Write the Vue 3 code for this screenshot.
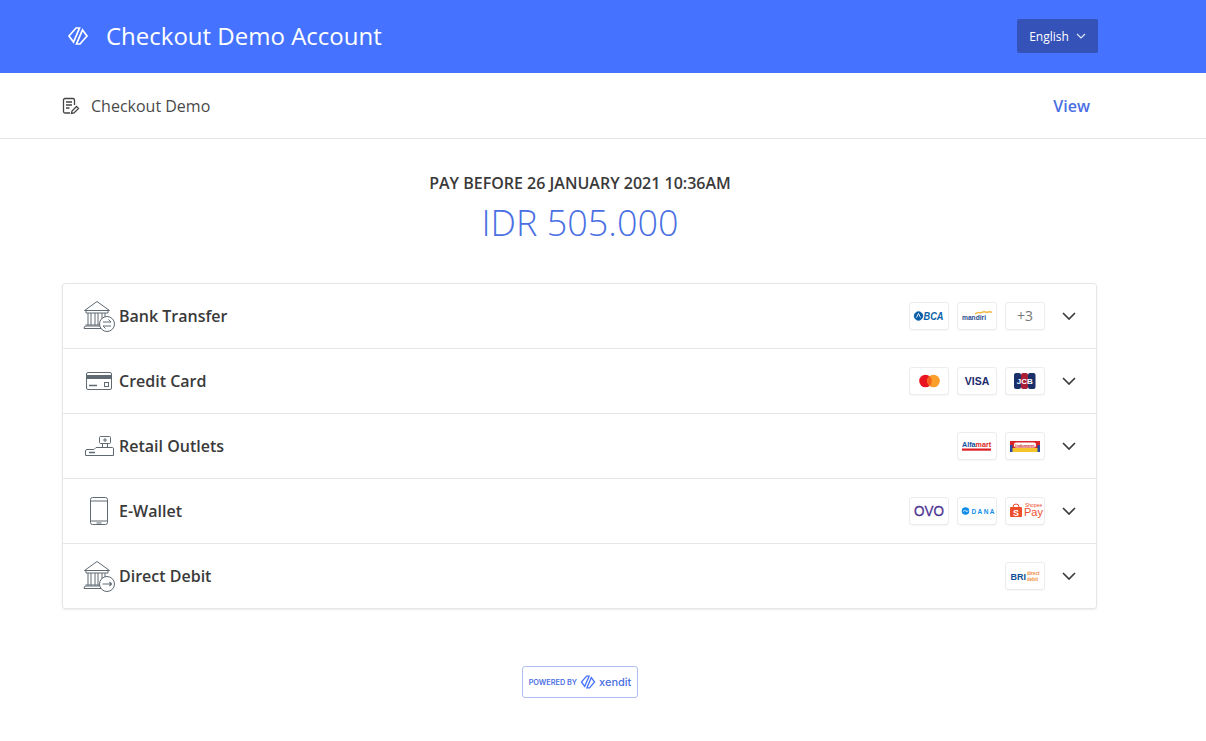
<script setup>
const methods = [
    {
        name: 'Bank Transfer',
        icon: 'bankSwap',
        logos: ['bca', 'mandiri', 'more']
    },
    {
        name: 'Credit Card',
        icon: 'card',
        logos: ['mastercard', 'visa', 'jcb']
    },
    {
        name: 'Retail Outlets',
        icon: 'retail',
        logos: ['alfamart', 'indomaret']
    },
    {
        name: 'E-Wallet',
        icon: 'phone',
        logos: ['ovo', 'dana', 'shopeepay']
    },
    {
        name: 'Direct Debit',
        icon: 'bankArrow',
        logos: ['bri']
    }
]
</script>

<template>
    <div class="page">
        <header class="topbar">
            <div class="topbar-inner">
                <div class="brand">
                    <svg class="brand-icon" viewBox="0 0 22 22" fill="none" stroke="#fff" stroke-width="1.7">
                        <path d="M12.5 3 H9 L2 11 L6.5 17 Z" />
                        <path d="M9.5 19 H13 L20 11 L15.5 5 Z" />
                    </svg>
                    <h1>Checkout Demo Account</h1>
                </div>
                <button class="lang">
                    English
                    <svg viewBox="0 0 10 6" width="10" height="6" fill="none" stroke="#dfe6ff" stroke-width="1.2">
                        <path d="M1 1 L5 5 L9 1" />
                    </svg>
                </button>
            </div>
        </header>

        <div class="subbar">
            <div class="subbar-inner">
                <div class="order">
                    <svg viewBox="0 0 18 18" width="18" height="18" fill="none" stroke="#444" stroke-width="1.3">
                        <path d="M12.5 8 V3 Q12.5 1.5 11 1.5 H3 Q1.5 1.5 1.5 3 V14.5 Q1.5 16 3 16 H8" />
                        <path d="M4 5 H10 M4 8 H10 M4 11 H7.5" />
                        <path d="M9.5 16.5 L10 14 L14.5 9.5 L16.5 11.5 L12 16 Z" />
                    </svg>
                    <span>Checkout Demo</span>
                </div>
                <a class="view">View</a>
            </div>
        </div>

        <main class="main">
            <p class="deadline">PAY BEFORE 26 JANUARY 2021 10:36AM</p>
            <p class="amount">IDR 505.000</p>

            <div class="methods">
                <div v-for="m in methods" :key="m.name" class="method">
                    <svg class="method-icon" viewBox="0 0 36 36" fill="none" stroke="#5f6a73" stroke-width="1">
                        <template v-if="m.icon === 'bankSwap' || m.icon === 'bankArrow'">
                            <path d="M2.5 12.5 L15 3.5 L27.5 12.5 Z" />
                            <path d="M4 12.5 V15 H26 V12.5" />
                            <path d="M6 15 V27 M9 15 V27 M13 15 V27 M16 15 V27 M20 15 V21 M23 15 V19" />
                            <path d="M3.5 27 H18 M2 30.5 Q2 28 4 28 H18 M2 30.5 H19" />
                            <circle cx="25" cy="26" r="7.5" fill="#fff" />
                            <path v-if="m.icon === 'bankSwap'" d="M21 24 H29 L26.5 21.5 M29 28 H21 L23.5 30.5" />
                            <path v-else d="M20.5 26 H29.5 M27.5 24 L29.5 26 L27.5 28" stroke-width="1.2" />
                        </template>
                        <template v-else-if="m.icon === 'card'">
                            <rect x="4.5" y="9.5" width="25" height="17" rx="1.5" />
                            <rect x="4.5" y="12" width="25" height="4" fill="#5f6a73" stroke="none" />
                            <path d="M7 22.5 H15" stroke-width="1.5" />
                            <rect x="22.5" y="19.5" width="4" height="4" />
                        </template>
                        <template v-else-if="m.icon === 'retail'">
                            <path d="M3.5 27.5 V23 Q3.5 21.5 5 21.5 H12 L14 19.5 H30.5 Q31.5 19.5 31.5 21 V27.5 Z" />
                            <rect x="17.5" y="8.5" width="11" height="7" rx="1" />
                            <path d="M23 10 V14 M21 12 H25" />
                            <path d="M20.5 15.5 V19.5 M25.5 15.5 V19.5" />
                            <path d="M7 24.5 H13" stroke-width="1.5" />
                        </template>
                        <template v-else-if="m.icon === 'phone'">
                            <rect x="8.5" y="4.5" width="17" height="27" rx="2" />
                            <path d="M8.5 8 H25.5 M8.5 28 H25.5" />
                            <path d="M14.5 30 H19.5" />
                        </template>
                    </svg>
                    <span class="method-name">{{ m.name }}</span>

                    <div class="logos">
                        <div v-for="logo in m.logos" :key="logo" class="logo">
                            <svg viewBox="0 0 40 28" width="40" height="28">
                                <template v-if="logo === 'bca'">
                                    <circle cx="9.5" cy="14" r="4.2" fill="#0b5fa8" stroke="#0b5fa8" stroke-width="1" />
                                    <path d="M7.5 15.5 L9.5 11.5 L11.5 15.5" fill="none" stroke="#fff" stroke-width="0.9" />
                                    <text x="14.5" y="18" class="t-bca" textLength="20" lengthAdjust="spacingAndGlyphs">BCA</text>
                                </template>
                                <template v-else-if="logo === 'mandiri'">
                                    <path d="M18 12 Q21 9.5 24 11 M24 11 Q27 9 30 10.5 M30 10.5 Q33 9 35 10.5" fill="none" stroke="#f4b73f" stroke-width="1.5" />
                                    <text x="5" y="18" class="t-mandiri" textLength="24" lengthAdjust="spacingAndGlyphs">mandiri</text>
                                </template>
                                <text v-else-if="logo === 'more'" x="20" y="19" class="t-more">+3</text>
                                <template v-else-if="logo === 'mastercard'">
                                    <circle cx="16.5" cy="14" r="6.3" fill="#e8141f" />
                                    <circle cx="24.5" cy="14" r="6.3" fill="#fb9e2a" />
                                    <path d="M20.5 9.1 A6.3 6.3 0 0 1 20.5 18.9 A6.3 6.3 0 0 1 20.5 9.1" fill="#f5641e" />
                                </template>
                                <text v-else-if="logo === 'visa'" x="20" y="18" class="t-visa">VISA</text>
                                <template v-else-if="logo === 'jcb'">
                                    <rect x="9" y="6" width="7" height="16" rx="2" fill="#1b2f6b" />
                                    <rect x="16" y="6" width="7" height="16" rx="2" fill="#a81f36" />
                                    <rect x="23" y="6" width="7.5" height="16" rx="2" fill="#1b2f6b" />
                                    <text x="19.8" y="17" class="t-jcb">JCB</text>
                                </template>
                                <template v-else-if="logo === 'alfamart'">
                                    <text x="5" y="15" class="t-alfa"><tspan fill="#0f4fa0">Alfa</tspan><tspan fill="#dd1f26">mart</tspan></text>
                                    <rect x="5" y="16.5" width="29" height="2.2" fill="#dd1f26" />
                                </template>
                                <template v-else-if="logo === 'indomaret'">
                                    <rect x="5" y="9" width="30" height="7" fill="#d8232a" />
                                    <rect x="5" y="16" width="30" height="4" fill="#f5c32c" />
                                    <rect x="5" y="13" width="2.5" height="7" fill="#254c9c" />
                                    <rect x="32.5" y="13" width="2.5" height="7" fill="#254c9c" />
                                    <rect x="9" y="10.5" width="22" height="5" rx="2" fill="#fff" />
                                    <text x="20" y="14.5" class="t-indo">Indomaret</text>
                                </template>
                                <text v-else-if="logo === 'ovo'" x="5" y="19" class="t-ovo" textLength="30" lengthAdjust="spacingAndGlyphs">OVO</text>
                                <template v-else-if="logo === 'dana'">
                                    <circle cx="8.5" cy="14" r="3.8" fill="#118eea" />
                                    <path d="M6 14.5 Q7.5 12.5 9 14 T11 13.5" fill="none" stroke="#fff" stroke-width="0.8" />
                                    <text x="14.5" y="16.5" class="t-dana">DANA</text>
                                </template>
                                <template v-else-if="logo === 'shopeepay'">
                                    <rect x="5" y="10" width="12" height="10" rx="1" fill="#ee4d2d" />
                                    <path d="M8 10 Q8 7 11 7 Q14 7 14 10" fill="none" stroke="#ee4d2d" stroke-width="1" />
                                    <text x="11" y="18.5" class="t-s">S</text>
                                    <text x="20" y="10" class="t-shopee">Shopee</text>
                                    <text x="19" y="19" class="t-pay">Pay</text>
                                </template>
                                <template v-else-if="logo === 'bri'">
                                    <text x="5.5" y="18" class="t-bri">BRI</text>
                                    <text x="22" y="13" class="t-direct">direct</text>
                                    <text x="22" y="18.5" class="t-direct">debit</text>
                                </template>
                            </svg>
                        </div>
                    </div>

                    <svg class="chevron" viewBox="0 0 14 8" width="14" height="8" fill="none" stroke="#3c3c3c" stroke-width="1.7">
                        <path d="M1 1 L7 7 L13 1" />
                    </svg>
                </div>
            </div>

            <div class="powered">
                <span class="powered-by">POWERED BY</span>
                <svg class="powered-icon" viewBox="0 0 22 22" width="16" height="16" fill="none" stroke="#4573ff" stroke-width="1.8">
                    <path d="M12.5 3 H9 L2 11 L6.5 17 Z" />
                    <path d="M9.5 19 H13 L20 11 L15.5 5 Z" />
                </svg>
                <span class="xendit">xendit</span>
            </div>
        </main>
    </div>
</template>

<style scoped>
.page {
    font-family: "Open Sans", "Liberation Sans", sans-serif;
    color: #333;
    background: #fff;
    min-height: 741px;
}

.topbar {
    height: 73px;
    box-sizing: border-box;
    padding-bottom: 1px;
    background: #4573ff;
    display: flex;
    align-items: center;
}

.topbar-inner,
.subbar-inner {
    width: 1036px;
    margin-left: 62px;
    display: flex;
    align-items: center;
    justify-content: space-between;
}

.brand {
    display: flex;
    align-items: center;
    gap: 17px;
    padding-left: 5px;
}

.brand-icon {
    width: 22px;
    height: 22px;
}

h1 {
    margin: 0 0 1px;
    font-size: 24px;
    font-weight: 400;
    color: #fff;
}

.lang {
    width: 81px;
    height: 34px;
    border: 0;
    border-radius: 2px;
    background: #3552b8;
    color: #fff;
    font-family: inherit;
    font-size: 12px;
    display: flex;
    align-items: center;
    justify-content: center;
    gap: 7px;
}

.subbar {
    height: 65px;
    border-bottom: 1px solid #e4e4e4;
    display: flex;
    align-items: center;
}

.order {
    display: flex;
    align-items: center;
    gap: 11px;
    font-size: 16px;
    color: #4a4a4a;
}

.view {
    font-size: 16px;
    font-weight: 600;
    color: #4a6fe3;
    margin-right: 8px;
}

.main {
    width: 1036px;
    margin-left: 62px;
    padding-top: 34px;
    display: flex;
    flex-direction: column;
    align-items: center;
}

.deadline {
    margin: 0;
    font-size: 16px;
    font-weight: 600;
    line-height: 20px;
    color: #3a3a3a;
}

.amount {
    margin: 5px 0 0;
    font-size: 36px;
    font-weight: 300;
    line-height: 50px;
    color: #4a6fe3;
}

.methods {
    width: 1035px;
    box-sizing: border-box;
    align-self: flex-start;
    margin-top: 35px;
    border: 1px solid #e6e6e6;
    border-radius: 3px;
    box-shadow: 0 1px 2px rgba(0, 0, 0, 0.08);
}

.method {
    height: 64px;
    display: flex;
    align-items: center;
    padding-left: 19px;
    padding-right: 20px;
    border-bottom: 1px solid #e6e6e6;
}

.method:last-child {
    border-bottom: 0;
}

.method-icon {
    width: 36px;
    height: 36px;
    margin-right: 1px;
}

.method-name {
    font-size: 16px;
    font-weight: 600;
    color: #3a3a3a;
}

.logos {
    margin-left: auto;
    display: flex;
    gap: 8px;
}

.logo {
    width: 40px;
    height: 28px;
    box-sizing: border-box;
    border: 1px solid #ececec;
    border-radius: 3px;
    background: #fff;
    box-shadow: 0 1px 1px rgba(0, 0, 0, 0.04);
}

.logo svg {
    display: block;
    margin: -1px;
}

.chevron {
    margin-left: 17px;
}

.logo text {
    font-family: "Liberation Sans", sans-serif;
}

.t-bca {
    font-size: 11px;
    font-weight: 700;
    font-style: italic;
    fill: #0b5fa8;
}

.t-mandiri {
    font-size: 7.5px;
    font-weight: 700;
    fill: #1f4b8e;
}

.logo .t-more {
    font-family: "Open Sans", sans-serif;
    font-size: 14px;
    fill: #777;
    text-anchor: middle;
}

.t-visa {
    font-size: 10.5px;
    font-weight: 700;
    fill: #1c2a6b;
    text-anchor: middle;
}

.t-jcb {
    font-size: 8px;
    font-weight: 700;
    fill: #fff;
    text-anchor: middle;
}

.t-alfa {
    font-size: 7.2px;
    font-weight: 700;
}

.t-indo {
    font-size: 4px;
    font-weight: 700;
    fill: #c22;
    text-anchor: middle;
}

.t-ovo {
    font-size: 14px;
    fill: #4c3494;
    stroke: #4c3494;
    stroke-width: 0.3;
}

.t-dana {
    font-size: 6.5px;
    font-weight: 700;
    letter-spacing: 1.4px;
    fill: #118eea;
}

.t-s {
    font-size: 9px;
    font-weight: 700;
    fill: #fff;
    text-anchor: middle;
}

.t-shopee {
    font-size: 5px;
    fill: #ee4d2d;
}

.t-pay {
    font-size: 11px;
    fill: #ee4d2d;
}

.t-bri {
    font-size: 9px;
    font-weight: 700;
    fill: #0f4f94;
}

.t-direct {
    font-size: 4.6px;
    font-weight: 700;
    fill: #ee8b3a;
}

.powered {
    width: 116px;
    height: 32px;
    box-sizing: border-box;
    margin-top: 57px;
    border: 1px solid #aebdf3;
    border-radius: 3px;
    display: flex;
    align-items: center;
    justify-content: center;
    color: #4a6fe3;
}

.powered-by {
    font-family: "Inter", sans-serif;
    font-size: 7.3px;
    font-weight: 600;
}

.powered-icon {
    margin: 0 3px;
}

.xendit {
    font-family: "Inter", sans-serif;
    font-size: 11px;
    font-weight: 500;
}
</style>
